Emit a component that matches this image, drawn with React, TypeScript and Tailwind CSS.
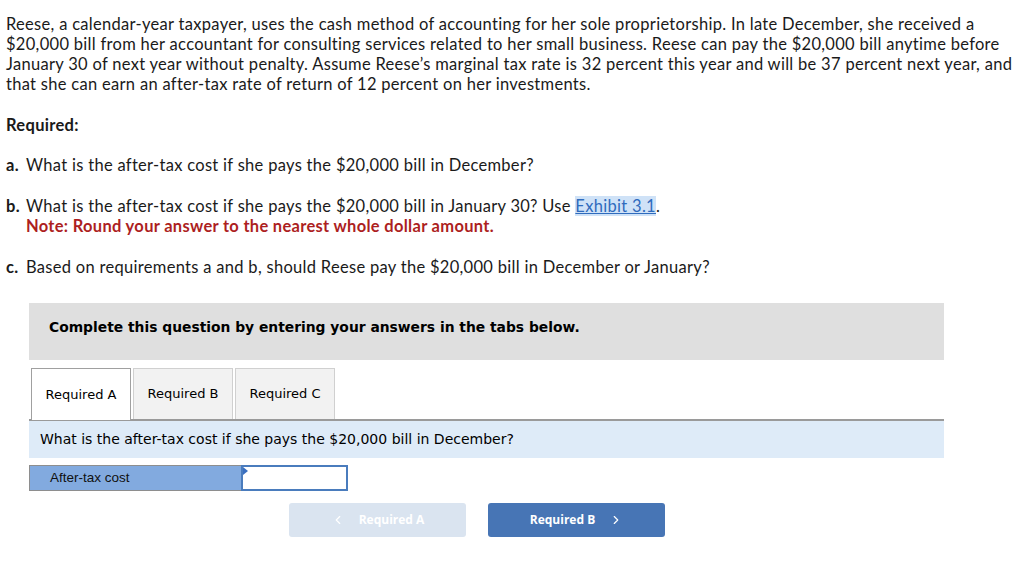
import React from "react";
import { ChevronLeft, ChevronRight } from "lucide-react";

const body = { fontFamily: "Lato, 'Liberation Sans', sans-serif" };
const btn = { fontFamily: "'Open Sans', 'Liberation Sans', sans-serif" };
const verdana = { fontFamily: "'DejaVu Sans', Verdana, sans-serif" };

export default function App() {
  return (
    <div className="w-[1024px] h-[564px] bg-white overflow-hidden text-[#1a1a1a]">
      <div className="pt-[14px] pl-[6px] pr-1 text-[16.5px] leading-[20px] tracking-[0.3px]" style={body}>
        <p className="whitespace-nowrap">
          Reese, a calendar-year taxpayer, uses the cash method of accounting for her sole proprietorship. In late December, she received a
          <br />
          $20,000 bill from her accountant for consulting services related to her small business. Reese can pay the $20,000 bill anytime before
          <br />
          January 30 of next year without penalty. Assume Reese’s marginal tax rate is 32 percent this year and will be 37 percent next year, and
          <br />
          that she can earn an after-tax rate of return of 12 percent on her investments.
        </p>
        <p className="mt-[21px] font-bold">Required:</p>
        <p className="mt-[20px] flex">
          <span className="w-[20px] font-bold">a.</span>
          <span>What is the after-tax cost if she pays the $20,000 bill in December?</span>
        </p>
        <div className="mt-[21px] flex">
          <span className="w-[20px] font-bold">b.</span>
          <div>
            <p>
              What is the after-tax cost if she pays the $20,000 bill in January 30? Use{" "}
              <span className="text-[#2f6bbd] underline bg-[#cfe2f7]">Exhibit 3.1</span>.
            </p>
            <p className="font-bold text-[#ad1f1f]">Note: Round your answer to the nearest whole dollar amount.</p>
          </div>
        </div>
        <p className="mt-[21px] flex">
          <span className="w-[20px] font-bold">c.</span>
          <span>Based on requirements a and b, should Reese pay the $20,000 bill in December or January?</span>
        </p>
      </div>

      <div className="ml-[29px] w-[915px] mt-[26px]">
        <div className="h-[57px] bg-[#dfdfdf] flex items-center pl-[20px] pb-[8px]">
          <span className="font-bold text-[13.85px] text-black" style={verdana}>
            Complete this question by entering your answers in the tabs below.
          </span>
        </div>

        <div className="mt-[8px] flex items-end gap-[2px] pl-[2px] h-[51px]" style={verdana}>
          <div className="w-[100px] h-[52px] -mb-px bg-white border border-[#a0a0a0] border-b-0 flex items-center justify-center text-[13px] text-black relative z-10">
            Required A
          </div>
          <div className="w-[100px] h-[51px] bg-[#f2f2f2] border border-[#d0d0d0] border-b-0 flex items-center justify-center text-[13px] text-black">
            Required B
          </div>
          <div className="w-[100px] h-[51px] bg-[#f2f2f2] border border-[#d0d0d0] border-b-0 flex items-center justify-center text-[13px] text-black">
            Required C
          </div>
        </div>
        <div
          className="h-[39px] bg-[#deebf8] border-t-2 border-[#9a9a9a] flex items-center pl-[11px] text-[14px] text-black"
          style={verdana}
        >
          What is the after-tax cost if she pays the $20,000 bill in December?
        </div>

        <div className="mt-[7px] flex h-[26px]">
          <div
            className="w-[212px] bg-[#82aadf] border border-[#8e8e8e] border-r-0 flex items-center pl-[20px] text-[13.5px] text-[#111]"
            style={{ fontFamily: "'Liberation Sans', Arial, sans-serif" }}
          >
            After-tax cost
          </div>
          <div className="w-[107px] border-2 border-[#4a7cbd] bg-white relative">
            <span className="absolute left-0 top-0 w-0 h-0 border-t-[4px] border-b-[4px] border-l-[5px] border-t-transparent border-b-transparent border-l-[#3a6fc0]" />
          </div>
        </div>

        <div className="mt-[12px] flex gap-[22px] pl-[260px]" style={btn}>
          <button className="w-[177px] h-[34px] rounded-[3px] bg-[#dae4f0] text-white font-bold text-[12px] flex items-center justify-center gap-[14px]">
            <ChevronLeft className="w-[14px] h-[14px]" strokeWidth={2} />
            <span>Required A</span>
          </button>
          <button className="w-[177px] h-[34px] rounded-[3px] bg-[#4775b5] text-white font-bold text-[12px] flex items-center justify-center gap-[14px]">
            <span>Required B</span>
            <ChevronRight className="w-[14px] h-[14px]" strokeWidth={2} />
          </button>
        </div>
      </div>
    </div>
  );
}
